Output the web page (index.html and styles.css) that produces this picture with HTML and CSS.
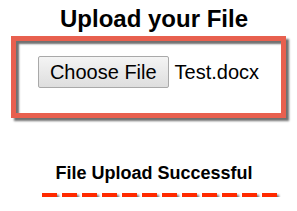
FILE: index.html
```html
<!DOCTYPE html>
<html>
  <head>
    <title>Upload your File</title>
    <link rel="stylesheet" href="styles.css">
  </head>
  <body>
    <h1 class="title">Upload your File</h1>
    <div class="uploadBox">
      <div class="fileRow">
        <button class="chooseBtn" type="button">Choose File</button>
        <span class="fileName">Test.docx</span>
      </div>
    </div>

    <p class="status">File Upload Successful</p>
    <div class="underline"></div>
  </body>
</html>
```

FILE: styles.css
```css
body {
  margin: 0;
  font-family: "Liberation Sans", Arial, sans-serif;
  background-color: #fff;
  color: #000;
}

.title {
  margin: 6px 0 0;
  padding-left: 11px;
  font-size: 24px;
  line-height: 26px;
  text-align: center;
}

.uploadBox {
  width: 265px;
  height: 72px;
  margin: 4px 0 0 11px;
  border: 5px solid #e8604f;
  box-shadow: 3px 3px 2px #707070, inset 3px 3px 2px #707070;
}

.fileRow {
  display: flex;
  justify-content: center;
  align-items: center;
  gap: 6px;
  padding-top: 15px;
}

.chooseBtn {
  margin: 0;
  padding: 4px 11px;
  font-family: inherit;
  font-size: 20px;
  line-height: 22px;
  color: #000;
  border: 1px solid #a9a9a9;
  border-radius: 2px;
  background: linear-gradient(#f4f4f4, #dedede);
}

.fileName {
  font-size: 20px;
  line-height: 22px;
}

.status {
  margin: 45px 0 0;
  padding-left: 11px;
  font-size: 18px;
  font-weight: bold;
  line-height: 20px;
  text-align: center;
}

.underline {
  width: 235px;
  height: 4px;
  margin: 10px 0 0 42px;
  background: repeating-linear-gradient(90deg, #ff2a00 0 15px, transparent 15px 20px);
  filter: drop-shadow(2px 2px 1px #666);
}
```
